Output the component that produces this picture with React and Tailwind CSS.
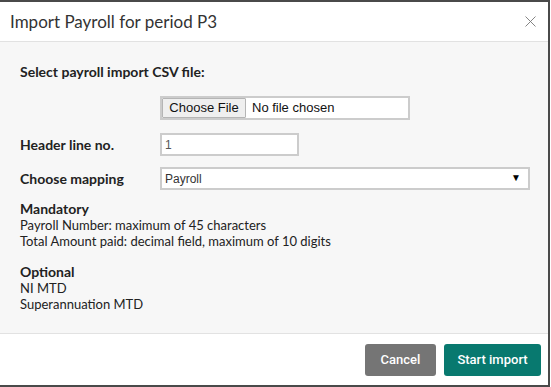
import React from 'react';

const body = { fontFamily: '"Segoe UI", Lato, "Open Sans", sans-serif' };
const arial = { fontFamily: '"Liberation Sans", Arial, sans-serif' };
const roboto = { fontFamily: 'Roboto, "Liberation Sans", sans-serif' };

function Row({ label, children }) {
  return (
    <div className="flex items-center">
      <div className="w-[140px] shrink-0 text-[14px] font-bold leading-4 text-[#222]">{label}</div>
      {children}
    </div>
  );
}

export default function App() {
  return (
    <div className="w-[551px] h-[387px] bg-white" style={body}>
      <div className="w-[550px] h-[387px] flex flex-col border-t-2 border-r-2 border-b-2 border-[#4a4a4a]">
        {/* header */}
        <div className="h-[40px] shrink-0 flex items-center justify-between border-b border-[#e2e2e2] pl-[10px] pr-[12px]">
          <h4 className="text-[17px] leading-6 text-[#333] font-normal">Import Payroll for period P3</h4>
          <button type="button" aria-label="Close" className="text-[#777]">
            <svg width="11" height="11" viewBox="0 0 11 11" stroke="currentColor" strokeWidth="0.9">
              <path d="M0.5 0.5l10 10M10.5 0.5l-10 10" />
            </svg>
          </button>
        </div>

        {/* body */}
        <div className="flex-1 bg-[#f7f7f7] pl-[20px] pt-[22px] text-[#222]">
          <div className="text-[14px] font-bold leading-4">Select payroll import CSV file:</div>

          <div className="mt-[16px] ml-[140px] w-[250px] h-[24px] border-2 border-[#cccccc] bg-white flex items-center" style={arial}>
            <span className="h-[20px] w-[84px] flex items-center justify-center bg-[#efefef] border border-[#b5b5b5] rounded-[1px] text-[13px] text-[#111]">Choose File</span>
            <span className="ml-[6px] text-[13px] text-[#111]">No file chosen</span>
          </div>

          <div className="mt-[13px]">
            <Row label="Header line no.">
              <input
                readOnly
                value="1"
                className="w-[139px] h-[23px] border-2 border-[#cccccc] bg-white px-[3px] text-[12px] text-[#555] outline-none"
                style={arial}
              />
            </Row>
          </div>

          <div className="mt-[11px]">
            <Row label="Choose mapping">
              <div className="relative w-[370px] h-[23px] border-2 border-[#cccccc] bg-white flex items-center px-[3px]" style={arial}>
                <span className="text-[12px] text-[#333]">Payroll</span>
                <span className="absolute right-[7px] top-[3px] text-[10px] leading-3 text-black">▼</span>
              </div>
            </Row>
          </div>

          <div className="mt-[11px] text-[13px] leading-4">
            <div className="font-bold text-[14px]">Mandatory</div>
            <div>Payroll Number: maximum of 45 characters</div>
            <div>Total Amount paid: decimal field, maximum of 10 digits</div>
            <div className="font-bold text-[14px] mt-[15px]">Optional</div>
            <div>NI MTD</div>
            <div>Superannuation MTD</div>
          </div>
        </div>

        {/* footer */}
        <div className="h-[52px] shrink-0 border-t border-[#e2e2e2] flex items-start justify-end pt-[10px] pr-[7px] gap-[8px]" style={roboto}>
          <button type="button" className="h-[32px] w-[71px] rounded-[3px] bg-[#757575] text-white text-[13px] font-medium">Cancel</button>
          <button type="button" className="h-[32px] w-[97px] rounded-[3px] bg-[#08796f] text-white text-[13px] font-medium">Start import</button>
        </div>
      </div>
    </div>
  );
}
